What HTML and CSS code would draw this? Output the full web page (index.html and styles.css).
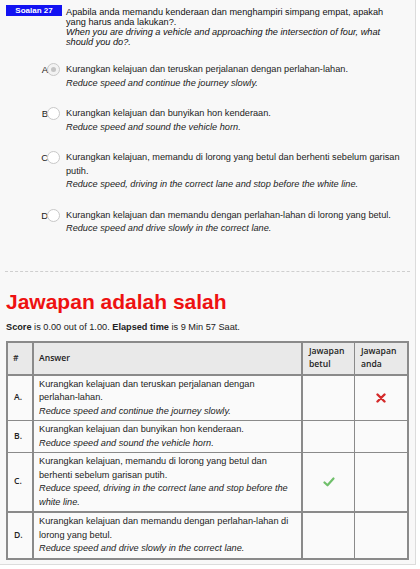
FILE: index.html
```html
<!DOCTYPE html>
<html>
<head>
<meta charset="utf-8">
<link rel="stylesheet" href="styles.css">
</head>
<body>
<div class="page">
  <div class="question">
    <div class="badge">Soalan 27</div>
    <div class="qtext">
      <div>Apabila anda memandu kenderaan dan menghampiri simpang empat, apakah yang harus anda lakukan?.</div>
      <div class="en">When you are driving a vehicle and approaching the intersection of four, what should you do?.</div>
    </div>
  </div>

  <div class="options">
    <div class="option">
      <div class="pick"><span class="letter">A</span><span class="radio checked"></span></div>
      <div class="otext">
        <div>Kurangkan kelajuan dan teruskan perjalanan dengan perlahan-lahan.</div>
        <div class="en">Reduce speed and continue the journey slowly.</div>
      </div>
    </div>
    <div class="option">
      <div class="pick"><span class="letter">B</span><span class="radio"></span></div>
      <div class="otext">
        <div>Kurangkan kelajuan dan bunyikan hon kenderaan.</div>
        <div class="en">Reduce speed and sound the vehicle horn.</div>
      </div>
    </div>
    <div class="option">
      <div class="pick"><span class="letter">C</span><span class="radio"></span></div>
      <div class="otext">
        <div>Kurangkan kelajuan, memandu di lorong yang betul dan berhenti sebelum garisan putih.</div>
        <div class="en">Reduce speed, driving in the correct lane and stop before the white line.</div>
      </div>
    </div>
    <div class="option">
      <div class="pick"><span class="letter">D</span><span class="radio"></span></div>
      <div class="otext">
        <div>Kurangkan kelajuan dan memandu dengan perlahan-lahan di lorong yang betul.</div>
        <div class="en">Reduce speed and drive slowly in the correct lane.</div>
      </div>
    </div>
  </div>

  <div class="divider"></div>

  <h1 class="result">Jawapan adalah salah</h1>
  <p class="score"><b>Score</b> is 0.00 out of 1.00. <b>Elapsed time</b> is 9 Min 57 Saat.</p>

  <table class="answers">
    <thead>
      <tr>
        <th class="c-num">#</th>
        <th class="c-ans">Answer</th>
        <th class="c-mark">Jawapan betul</th>
        <th class="c-mark2">Jawapan anda</th>
      </tr>
    </thead>
    <tbody>
      <tr class="r-a">
        <td class="c-num">A.</td>
        <td class="c-ans">Kurangkan kelajuan dan teruskan perjalanan dengan <span class="nb">perlahan-lahan.</span><br><span class="en">Reduce speed and continue the journey slowly.</span></td>
        <td class="c-mark"></td>
        <td class="c-mark2"><svg class="cross" width="10" height="10" viewBox="0 0 10 10"><path d="M1.5 1.5 L8.5 8.5 M8.5 1.5 L1.5 8.5" stroke="#d42a2a" stroke-width="2.4" stroke-linecap="round"/></svg></td>
      </tr>
      <tr>
        <td class="c-num">B.</td>
        <td class="c-ans">Kurangkan kelajuan dan bunyikan hon kenderaan.<br><span class="en">Reduce speed and sound the vehicle horn.</span></td>
        <td class="c-mark"></td>
        <td class="c-mark2"></td>
      </tr>
      <tr>
        <td class="c-num">C.</td>
        <td class="c-ans">Kurangkan kelajuan, memandu di lorong yang betul dan berhenti sebelum garisan putih.<br><span class="en">Reduce speed, driving in the correct lane and stop before the white line.</span></td>
        <td class="c-mark"><svg class="check" width="12" height="10" viewBox="0 0 12 10"><path d="M1.5 5.5 L4.5 8.3 L10.5 1.5" fill="none" stroke="#6fbf6a" stroke-width="2.2" stroke-linecap="round" stroke-linejoin="round"/></svg></td>
        <td class="c-mark2"></td>
      </tr>
      <tr class="r-d">
        <td class="c-num">D.</td>
        <td class="c-ans">Kurangkan kelajuan dan memandu dengan perlahan-lahan di lorong yang betul.<br><span class="en">Reduce speed and drive slowly in the correct lane.</span></td>
        <td class="c-mark"></td>
        <td class="c-mark2"></td>
      </tr>
    </tbody>
  </table>
</div>
</body>
</html>
```

FILE: styles.css
```css
html, body {
  margin: 0;
  padding: 0;
  background: #ffffff;
}

body {
  font-family: "Liberation Sans", Arial, sans-serif;
  font-size: 9.2px;
  color: #222;
}

.page {
  width: 415px;
  height: 559px;
  background: #f8f8f8;
  border-right: 1px solid #dcdcdc;
  border-bottom: 1px solid #dcdcdc;
  padding: 5px 0 0 0;
  box-sizing: content-box;
  overflow: hidden;
}

.question {
  display: flex;
  align-items: flex-start;
  padding-left: 6px;
}

.badge {
  width: 56px;
  height: 11px;
  background: #1212f2;
  color: #fff;
  font-weight: bold;
  font-size: 8px;
  line-height: 11px;
  text-align: center;
  flex: none;
}

.qtext {
  margin-left: 4px;
  margin-top: 2px;
  line-height: 10px;
  width: 330px;
  color: #111;
}

.en {
  font-style: italic;
}

.nb {
  white-space: nowrap;
}

.options {
  margin-top: 16px;
  display: flex;
  flex-direction: column;
  gap: 17px;
}

.option {
  display: flex;
  align-items: flex-start;
  line-height: 13.5px;
  color: #222;
}

.pick {
  width: 66px;
  flex: none;
  display: flex;
  justify-content: flex-end;
  align-items: center;
  padding-right: 6px;
  box-sizing: border-box;
  height: 13.5px;
}

.letter {
  font-size: 9.5px;
  color: #222;
}

.radio {
  width: 11px;
  height: 11px;
  border: 1px solid #c8c8c8;
  border-radius: 50%;
  background: #fff;
  position: relative;
  margin-left: -1px;
}

.radio.checked {
  background: #f2f2f2;
}

.radio.checked::after {
  content: "";
  position: absolute;
  left: 3px;
  top: 3px;
  width: 5px;
  height: 5px;
  border-radius: 50%;
  background: #c4c4c4;
}

.otext {
  width: 340px;
}

.divider {
  margin: 35px 5px 0 5px;
  border-top: 1px dashed #cfcfcf;
  width: 405px;
}

.result {
  margin: 18px 0 0 6px;
  font-size: 21px;
  line-height: 24px;
  font-weight: bold;
  color: #ee1111;
}

.score {
  margin: 7px 0 0 6px;
  font-size: 9.2px;
  line-height: 12px;
  color: #222;
}

.answers {
  margin: 8px 0 0 6px;
  width: 403px;
  border-collapse: collapse;
  border: 2px solid #8a8a8a;
  table-layout: fixed;
}

.answers th {
  background: #e9e9e9;
  font-family: "Open Sans", "DejaVu Sans", sans-serif;
  font-weight: 600;
  font-size: 8.6px;
  line-height: 13px;
  color: #222;
  text-align: left;
  padding: 2px 5px;
  height: 27px;
  border: 1px solid #8a8a8a;
  border-bottom-width: 2px;
}

.answers td {
  background: #fafafa;
  line-height: 13.5px;
  padding: 2px 5px;
  border: 1px solid #8a8a8a;
  vertical-align: middle;
  color: #222;
}

.answers .c-num {
  width: 14px;
  border-right-width: 2px;
}

.answers td.c-num {
  font-family: "Open Sans", "DejaVu Sans", sans-serif;
  font-weight: 600;
  font-size: 8.6px;
  padding-left: 6px;
}

.answers .c-ans {
  width: 257px;
  border-right-width: 2px;
}

.answers td.c-ans {
  padding-right: 6px;
}

.answers .c-mark {
  width: 40px;
  text-align: center;
}

.answers .c-mark2 {
  text-align: center;
}

.answers th.c-mark, .answers th.c-mark2 {
  text-align: left;
  padding-left: 6px;
}

.r-d td {
  border-top-width: 2px;
}

.cross, .check {
  display: inline-block;
  vertical-align: middle;
}
```
